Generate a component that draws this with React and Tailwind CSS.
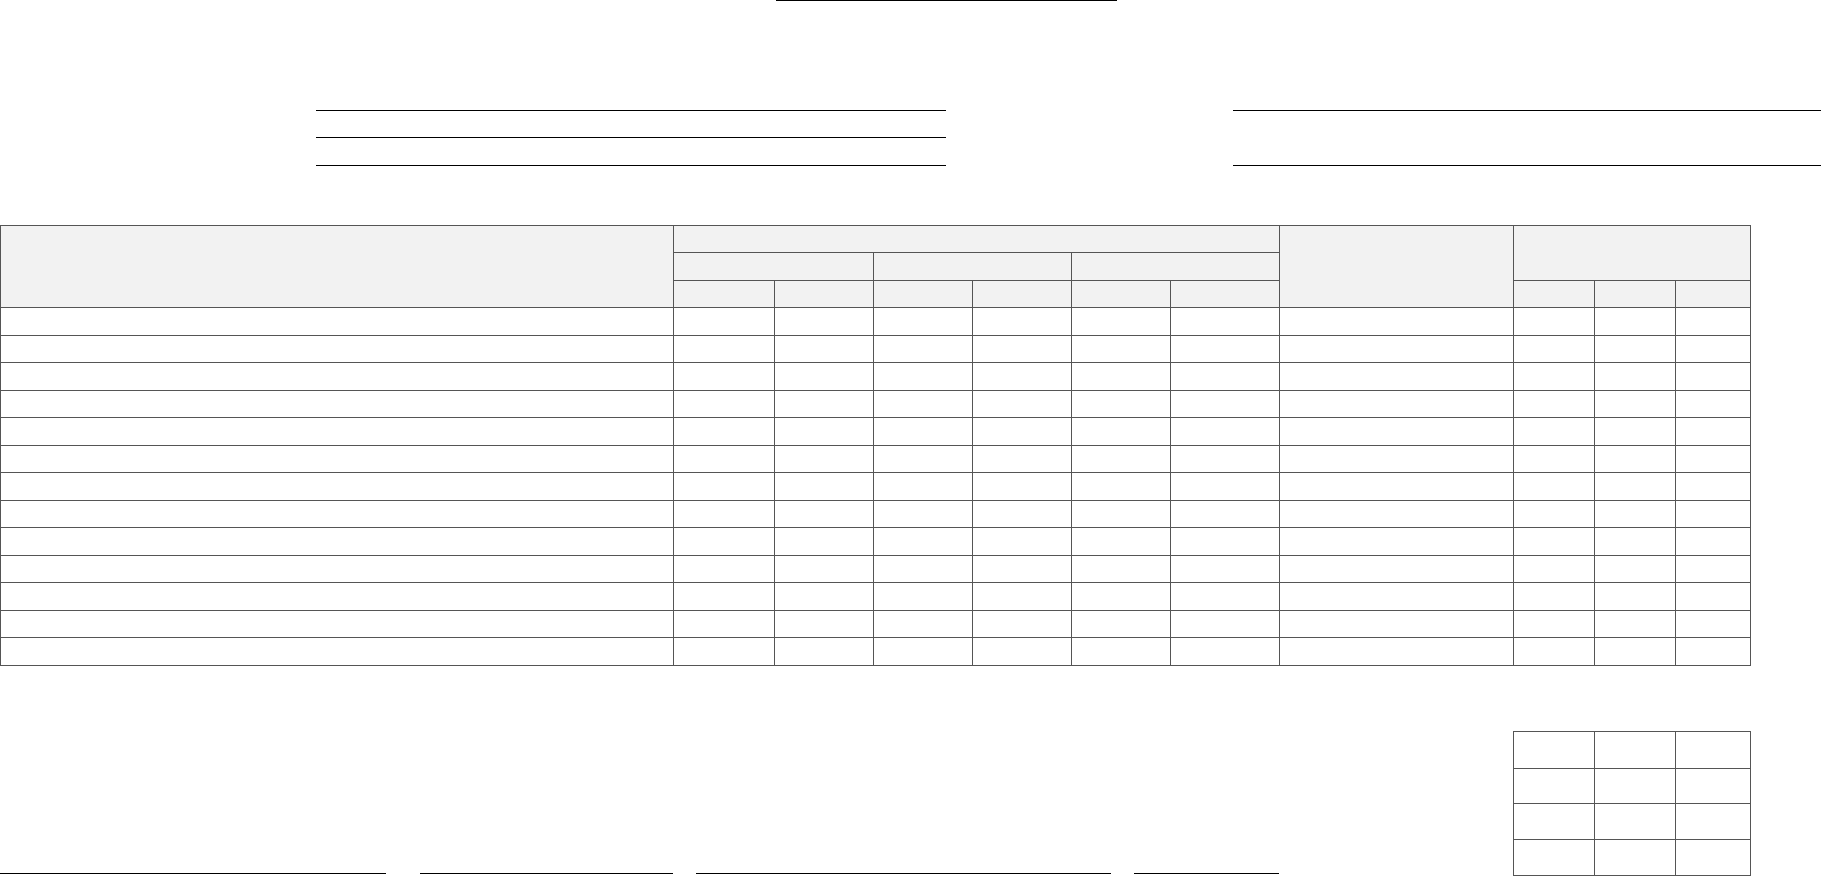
const colWidths = [673, 101, 99, 99, 99, 99, 109, 234, 81, 81, 75];
const bodyRows = Array.from({ length: 13 }, (_, i) => i);

const cell = "border border-[#555555] p-0";
const head = "border border-[#555555] bg-[#f2f2f2] p-0";

const Line = ({ className = "" }) => <div className={"h-px bg-black " + className} />;

const MainTable = () => {
    return (
        <table className="mt-[59px] w-[1751px] table-fixed border-collapse">
            <colgroup>
                {colWidths.map((w, i) => (
                    <col key={i} style={{ width: w }} />
                ))}
            </colgroup>
            <thead>
                <tr className="h-[27px]">
                    <th rowSpan={3} className={head}></th>
                    <th colSpan={6} className={head}></th>
                    <th rowSpan={3} className={head}></th>
                    <th colSpan={3} rowSpan={2} className={head}></th>
                </tr>
                <tr className="h-[28px]">
                    <th colSpan={2} className={head}></th>
                    <th colSpan={2} className={head}></th>
                    <th colSpan={2} className={head}></th>
                </tr>
                <tr className="h-[27px]">
                    {[1, 2, 3, 4, 5, 6, 8, 9, 10].map((k) => (
                        <th key={k} className={head}></th>
                    ))}
                </tr>
            </thead>
            <tbody>
                {bodyRows.map((r) => (
                    <tr key={r} className="h-[27.5px]">
                        {colWidths.map((_, c) => (
                            <td key={c} className={cell}></td>
                        ))}
                    </tr>
                ))}
            </tbody>
        </table>
    );
};

const SmallTable = () => {
    const heights = ["h-[37px]", "h-[35px]", "h-[36px]", "h-[36px]"];
    return (
        <table className="ml-[234px] w-[238px] table-fixed border-collapse">
            <colgroup>
                <col style={{ width: 81 }} />
                <col style={{ width: 81 }} />
                <col style={{ width: 75 }} />
            </colgroup>
            <tbody>
                {heights.map((h, i) => (
                    <tr key={i} className={h}>
                        <td className={cell}></td>
                        <td className={cell}></td>
                        <td className={cell}></td>
                    </tr>
                ))}
            </tbody>
        </table>
    );
};

export default function App() {
    return (
        <div className="w-[1821px] h-[877px] overflow-hidden bg-white font-['Liberation_Sans',sans-serif]">
            {/* title underline */}
            <Line className="ml-[776px] w-[341px]" />

            {/* header fields */}
            <div className="flex mt-[109px]">
                <div className="ml-[316px] w-[630px] flex flex-col">
                    <Line />
                    <div className="h-[26px]" />
                    <Line />
                    <div className="h-[27px]" />
                    <Line />
                </div>
                <div className="ml-[287px] flex-1 flex flex-col">
                    <Line />
                    <div className="h-[54px]" />
                    <Line />
                </div>
            </div>

            <MainTable />

            {/* signatures + totals */}
            <div className="flex items-end mt-[65px]">
                <div className="flex items-end mb-[2px]">
                    <Line className="w-[386px]" />
                    <Line className="ml-[34px] w-[253px]" />
                    <Line className="ml-[23px] w-[415px]" />
                    <Line className="ml-[23px] w-[145px]" />
                </div>
                <SmallTable />
            </div>
        </div>
    );
}
